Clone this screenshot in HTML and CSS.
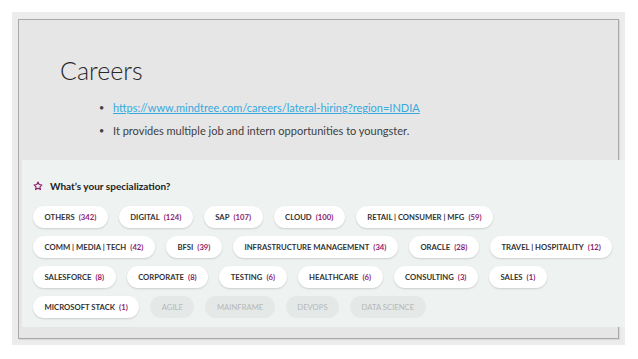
FILE: index.html
```html
<!DOCTYPE html>
<html lang="en">
  <head>
    <meta charset="UTF-8" />
    <meta name="viewport" content="width=device-width, initial-scale=1.0" />
    <title>Careers</title>
    <link rel="stylesheet" href="styles.css">
  </head>
  <body>
    <div class="frame">
      <div class="slide">
        <h1 class="slide-title">Careers</h1>
        <ul class="slide-list">
          <li><a href="#">https://www.mindtree.com/careers/lateral-hiring?region=INDIA</a></li>
          <li>It provides multiple job and intern opportunities to youngster.</li>
        </ul>

        <div class="panel">
          <div class="panel-header">
            <svg class="star" width="10" height="10" viewBox="0 0 24 24">
              <path d="M12 2.5l2.9 6.1 6.6.8-4.9 4.6 1.3 6.6L12 17.3l-5.9 3.3 1.3-6.6-4.9-4.6 6.6-.8z" fill="none" stroke="#8b1a68" stroke-width="2.6" stroke-linejoin="round"/>
            </svg>
            <span>What’s your specialization?</span>
          </div>
          <div class="chips" id="chips"></div>
        </div>
      </div>
    </div>

    <script>
      const specializations = [
        { title: "Others", count: 342 },
        { title: "Digital", count: 124 },
        { title: "SAP", count: 107 },
        { title: "Cloud", count: 100 },
        { title: "Retail | Consumer | MFG", count: 59 },
        { title: "Comm | Media | Tech", count: 42 },
        { title: "BFSI", count: 39 },
        { title: "Infrastructure Management", count: 34 },
        { title: "Oracle", count: 28 },
        { title: "Travel | Hospitality", count: 12 },
        { title: "Salesforce", count: 8 },
        { title: "Corporate", count: 8 },
        { title: "Testing", count: 6 },
        { title: "Healthcare", count: 6 },
        { title: "Consulting", count: 3 },
        { title: "Sales", count: 1 },
        { title: "Microsoft Stack", count: 1 },
        { title: "Agile", count: 0 },
        { title: "Mainframe", count: 0 },
        { title: "DevOps", count: 0 },
        { title: "Data Science", count: 0 },
      ];

      document.getElementById("chips").innerHTML = specializations
        .map((s) =>
          s.count > 0
            ? `<span class="chip">${s.title}<span class="chip-count">(${s.count})</span></span>`
            : `<span class="chip chip-disabled">${s.title}</span>`
        )
        .join("");
    </script>
  </body>
</html>
```

FILE: styles.css
```css
* {
  margin: 0;
  padding: 0;
  box-sizing: border-box;
}

body {
  background-color: #ffffff;
  font-family: Lato, "Open Sans", sans-serif;
}

.frame {
  margin: 12px 13px 13px 12px;
  padding: 7px 6px 6px 6px;
  background-color: #ececec;
}

.slide {
  background-color: #e6e6e6;
  border: 1px solid #a9a9a9;
  box-shadow: 1px 1px 1px rgba(0, 0, 0, 0.08);
  padding: 35px 0 11px 0;
}

.slide-title {
  font-weight: 300;
  font-size: 25px;
  line-height: 30px;
  color: #262626;
  padding-left: 41px;
}

.slide-list {
  list-style: none;
  margin-top: 11px;
  padding-left: 80px;
  font-size: 11px;
  line-height: 23px;
  color: #404040;
}

.slide-list li::before {
  content: "•";
  display: inline-block;
  width: 14px;
  font-size: 9px;
  vertical-align: 1px;
  color: #404040;
}

.slide-list a {
  color: #36a9de;
}

.panel {
  margin: 18px -7px 0 3px;
  padding: 19px 11px 9px 11px;
  background-color: #eef2f1;
}

.panel-header {
  display: flex;
  align-items: center;
  gap: 7px;
  font-size: 10px;
  line-height: 14px;
  font-weight: 700;
  color: #222;
}

.chips {
  display: flex;
  flex-wrap: wrap;
  gap: 8px 11px;
  margin-top: 13px;
}

.chip {
  display: inline-flex;
  align-items: center;
  height: 22px;
  padding: 0 11.5px;
  border-radius: 11px;
  background-color: #ffffff;
  box-shadow: 0 1px 2px rgba(0, 0, 0, 0.15);
  font-size: 7.7px;
  font-weight: 700;
  text-transform: uppercase;
  color: #333;
  white-space: nowrap;
}

.chip-count {
  margin-left: 4px;
  color: #8e1b6c;
}

.chip-disabled {
  background-color: #e4e8e7;
  box-shadow: none;
  font-weight: 400;
  color: #b5b9b9;
}
```
